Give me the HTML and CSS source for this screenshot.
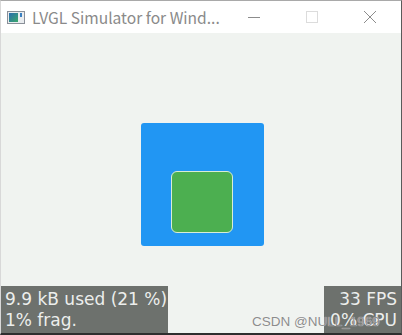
FILE: index.html
```html
<!DOCTYPE html>
<html>
<head>
<meta charset="utf-8">
<link rel="stylesheet" href="styles.css">
</head>
<body>
<div class="window">
  <div class="titlebar">
    <div class="app-icon">
      <svg width="18" height="13" viewBox="0 0 18 13">
        <rect x="0.5" y="0.5" width="17" height="12" fill="#e9ecef" stroke="#8a9099"/>
        <defs><linearGradient id="g" x1="0" y1="0" x2="1" y2="1"><stop offset="0" stop-color="#2a6db0"/><stop offset="1" stop-color="#3aa86a"/></linearGradient></defs>
        <rect x="2" y="2" width="9" height="9" fill="url(#g)"/>
        <rect x="13" y="2" width="2" height="4" fill="#3a7fc0"/>
      </svg>
    </div>
    <div class="title">LVGL Simulator for Wind...</div>
    <div class="controls">
      <div class="ctl"><svg width="14" height="14" viewBox="0 0 14 14"><line x1="1" y1="7.5" x2="13" y2="7.5" stroke="#8c8c8c" stroke-width="1"/></svg></div>
      <div class="ctl"><svg width="14" height="14" viewBox="0 0 14 14"><rect x="1.5" y="1.5" width="11" height="11" fill="none" stroke="#dcdcdc" stroke-width="1"/></svg></div>
      <div class="ctl"><svg width="14" height="14" viewBox="0 0 14 14"><path d="M1 1 L13 13 M13 1 L1 13" stroke="#8c8c8c" stroke-width="1"/></svg></div>
    </div>
  </div>
  <div class="screen">
    <div class="blue">
      <div class="green"></div>
    </div>
    <div class="stat stat-mem">9.9 kB used (21 %)<br>1% frag.</div>
    <div class="stat stat-perf">33 FPS<br>0% CPU</div>
    <div class="watermark">CSDN @NULL_1969</div>
  </div>
</div>
</body>
</html>
```
FILE: styles.css
```css
html, body {
  margin: 0;
  padding: 0;
  background: #ffffff;
}
.window {
  width: 402px;
  height: 335px;
  box-sizing: border-box;
  display: flex;
  flex-direction: column;
  border-top: 1px solid #a9a9a9;
  border-right: 1px solid #5a5a5a;
  border-bottom: 2px solid #2e2e2e;
  border-left: 1px solid #d8d8d8;
  overflow: hidden;
}
.titlebar {
  height: 32px;
  flex: none;
  background: #ffffff;
  display: flex;
  align-items: center;
}
.app-icon {
  width: 18px;
  height: 13px;
  margin-left: 6px;
  margin-right: 7px;
  display: flex;
}
.title {
  font-family: "Noto Sans CJK SC", "Noto Sans", sans-serif;
  font-size: 15.6px;
  color: #8a8a8a;
  flex: 1;
  white-space: nowrap;
}
.controls {
  display: flex;
  align-items: center;
  padding-right: 2px;
}
.ctl {
  width: 58px;
  height: 32px;
  display: flex;
  align-items: center;
  justify-content: center;
}
.ctl svg { display: block; }
.screen {
  flex: 1;
  background: #f0f3f0;
  position: relative;
  display: flex;
  align-items: center;
  justify-content: center;
}
.blue {
  width: 123px;
  height: 123px;
  margin-left: 2px;
  margin-top: 2px;
  background: #2196f3;
  border-radius: 3px;
  display: flex;
  align-items: flex-end;
  justify-content: center;
  padding-bottom: 13px;
  box-sizing: border-box;
}
.green {
  width: 62px;
  height: 62px;
  box-sizing: border-box;
  background: #4caf50;
  border: 1px solid #d8ecd6;
  border-radius: 6px;
  margin-left: -1px;
}
.stat {
  position: absolute;
  bottom: 0;
  background: #6d716d;
  color: #eceeec;
  font-family: "DejaVu Sans", sans-serif;
  font-size: 17px;
  line-height: 21px;
  padding: 3px 4px 2px 4px;
  white-space: nowrap;
}
.stat-mem {
  left: 0;
  width: 159px;
}
.stat-perf {
  right: 0;
  text-align: right;
  width: 69px;
}
.watermark {
  position: absolute;
  left: 251px;
  bottom: 4px;
  font-family: "Liberation Sans", Arial, sans-serif;
  font-size: 13.5px;
  color: #8c8c8c;
  text-shadow: 0 0 1px #ffffff;
  white-space: nowrap;
}
```
